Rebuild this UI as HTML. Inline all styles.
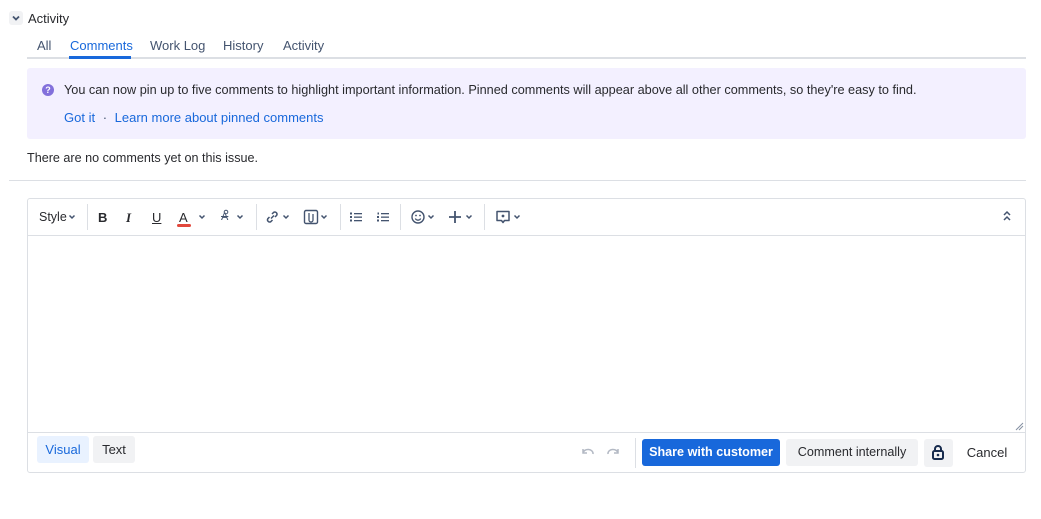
<!DOCTYPE html>
<html><head><style>
body{margin:0;width:1041px;height:519px;background:#fff;font-family:"Liberation Sans",sans-serif;font-size:13px;color:#292a2e;position:relative;overflow:hidden}
.a{position:absolute;white-space:nowrap}
.tb{position:absolute;top:210px;font-size:13px;color:#44546f}
.sep{position:absolute;top:204px;width:1px;height:26px;background:#dcdfe4}
.btn{position:absolute;border-radius:3px;text-align:center;line-height:27px}
svg.i{position:absolute}
</style></head><body>
<div class="a" style="left:9px;top:11px;width:14px;height:14px;background:#f1f2f4;border-radius:3px"></div>
<svg class="a" style="left:11px;top:13px" width="10" height="10"><path d="M2 3.5 L5 6.5 L8 3.5" stroke="#44546f" stroke-width="1.8" fill="none"/></svg>
<div class="a" style="left:28px;top:11px">Activity</div>
<div class="a" style="left:37px;top:38px;color:#44546f">All</div>
<div class="a" style="left:70px;top:38px;color:#1868db">Comments</div>
<div class="a" style="left:150px;top:38px;color:#44546f">Work Log</div>
<div class="a" style="left:223px;top:38px;color:#44546f">History</div>
<div class="a" style="left:283px;top:38px;color:#44546f">Activity</div>
<div class="a" style="left:27px;top:57px;width:999px;height:2px;background:#dcdfe4"></div>
<div class="a" style="left:69px;top:56px;width:62px;height:3px;background:#1868db"></div>
<div class="a" style="left:27px;top:68px;width:999px;height:71px;background:#f3f0ff;border-radius:3px"></div>
<div class="a" style="left:42px;top:84px;width:12px;height:12px;border-radius:50%;background:#8270db;color:#fff;font-size:9px;font-weight:bold;text-align:center;line-height:12px">?</div>
<div class="a" style="left:64px;top:83px;font-size:12.7px">You can now pin up to five comments to highlight important information. Pinned comments will appear above all other comments, so they're easy to find.</div>
<div class="a" style="left:64px;top:110px;color:#1868db">Got it <span style="color:#44546f;margin:0 4px">·</span> Learn more about pinned comments</div>
<div class="a" style="left:27px;top:151px;font-size:12.6px">There are no comments yet on this issue.</div>
<div class="a" style="left:9px;top:180px;width:1017px;height:1px;background:#dcdfe4"></div>
<div class="a" style="left:27px;top:198px;width:997px;height:273px;border:1px solid #dcdfe4;border-radius:3px"></div>
<div class="a" style="left:28px;top:235px;width:997px;height:1px;background:#dcdfe4"></div>
<div class="a" style="left:28px;top:432px;width:997px;height:1px;background:#dcdfe4"></div>
<div class="tb" style="left:39px;color:#292a2e;font-size:12.5px">Style</div>
<div class="sep" style="left:87px"></div>
<div class="tb" style="left:98px;font-weight:bold;color:#292a2e">B</div>
<div class="tb" style="left:126px;font-style:italic;font-family:'Liberation Serif',serif;font-weight:bold;color:#292a2e">I</div>
<div class="tb" style="left:152px;text-decoration:underline;color:#292a2e">U</div>
<div class="tb" style="left:179px;color:#292a2e">A</div>
<div class="a" style="left:177px;top:224px;width:14px;height:3px;background:#e2483d;border-radius:2px"></div>
<div class="tb" style="left:221px;font-size:11px;top:211px;text-decoration:line-through">A</div>
<div class="sep" style="left:256px"></div>
<svg class="i" style="left:264px;top:209px" width="16" height="16"><path d="M7 9.5 L10 6.5 M5.5 8 L3.8 9.7a2.2 2.2 0 0 0 3 3 L8.5 11 M8 5 L9.7 3.3a2.2 2.2 0 0 1 3 3 L11 8" stroke="#44546f" stroke-width="1.5" fill="none"/></svg>
<svg class="i" style="left:303px;top:209px" width="16" height="16"><rect x="1.5" y="1.5" width="13" height="13" rx="1.5" stroke="#44546f" stroke-width="1.4" fill="none"/><path d="M6 4v7a2 2 0 0 0 4 0V5" stroke="#44546f" stroke-width="1.3" fill="none"/></svg>
<div class="sep" style="left:340px"></div>
<svg class="i" style="left:349px;top:210px" width="14" height="14"><g fill="#44546f"><rect x="1" y="2.5" width="2" height="2"/><rect x="1" y="6" width="2" height="2"/><rect x="1" y="9.5" width="2" height="2"/><rect x="5" y="3" width="8" height="1.3"/><rect x="5" y="6.5" width="8" height="1.3"/><rect x="5" y="10" width="8" height="1.3"/></g></svg>
<svg class="i" style="left:376px;top:210px" width="14" height="14"><g fill="#44546f"><rect x="1.5" y="2.5" width="1.5" height="2"/><rect x="1" y="6" width="2" height="2"/><rect x="1" y="9.5" width="2" height="2"/><rect x="5" y="3" width="8" height="1.3"/><rect x="5" y="6.5" width="8" height="1.3"/><rect x="5" y="10" width="8" height="1.3"/></g></svg>
<div class="sep" style="left:400px"></div>
<svg class="i" style="left:410px;top:209px" width="16" height="16"><circle cx="8" cy="8" r="6" stroke="#44546f" stroke-width="1.4" fill="none"/><circle cx="6" cy="6.5" r="0.9" fill="#44546f"/><circle cx="10" cy="6.5" r="0.9" fill="#44546f"/><path d="M5.3 9.5a3 3 0 0 0 5.4 0" stroke="#44546f" stroke-width="1.3" fill="none"/></svg>
<svg class="i" style="left:448px;top:209px" width="14" height="16"><path d="M7 2v12M1 8h12" stroke="#44546f" stroke-width="1.8"/></svg>
<div class="sep" style="left:484px"></div>
<svg class="i" style="left:495px;top:209px" width="16" height="16"><path d="M2 2.5h12v9H9.5L8 13.5 6.5 11.5H2z" stroke="#44546f" stroke-width="1.5" fill="none" stroke-linejoin="round"/><circle cx="8" cy="7" r="1.4" fill="#44546f"/></svg>
<svg class="i" style="left:0;top:0" width="1041" height="240"><g stroke="#44546f" stroke-width="1.5" fill="none"><path d="M69.5 215.5l2.5 2.5 2.5-2.5"/><path d="M199.5 215.5l2.5 2.5 2.5-2.5"/><path d="M237.5 215.5l2.5 2.5 2.5-2.5"/><path d="M283.5 215.5l2.5 2.5 2.5-2.5"/><path d="M321.5 215.5l2.5 2.5 2.5-2.5"/><path d="M428.5 215.5l2.5 2.5 2.5-2.5"/><path d="M466.5 215.5l2.5 2.5 2.5-2.5"/><path d="M514.5 215.5l2.5 2.5 2.5-2.5"/><path d="M1004 215l3-3 3 3M1004 220l3-3 3 3"/></g><circle cx="226" cy="212" r="1.8" stroke="#44546f" stroke-width="1" fill="none"/></svg>
<svg class="i" style="left:1014px;top:421px" width="10" height="10"><path d="M2 9L9 2M5 9L9 5" stroke="#8590a2" stroke-width="1"/></svg>
<div class="btn" style="left:37px;top:436px;width:52px;background:#e9f2ff;color:#1868db">Visual</div>
<div class="btn" style="left:93px;top:436px;width:42px;background:#f1f2f4;color:#292a2e">Text</div>
<svg class="i" style="left:580px;top:446px" width="40" height="12"><g stroke="#b3b9c4" stroke-width="1.5" fill="none"><path d="M3 3v4h4M3 7a5 4 0 0 1 10 1"/><path d="M38 3v4h-4M38 7a5 4 0 0 0-10 1"/></g></svg>
<div class="a" style="left:635px;top:438px;width:1px;height:30px;background:#dcdfe4"></div>
<div class="btn" style="left:642px;top:439px;width:138px;background:#1868db;color:#fff;font-weight:bold;font-size:12.6px">Share with customer</div>
<div class="btn" style="left:786px;top:439px;width:132px;background:#f1f2f4;font-size:12.6px">Comment internally</div>
<div class="btn" style="left:924px;top:439px;width:29px;height:28px;background:#f1f2f4"></div>
<svg class="a" style="left:931px;top:444px" width="14" height="17"><path d="M4 7V5a3 3 0 0 1 6 0v2" stroke="#172b4d" stroke-width="2" fill="none"/><rect x="2" y="7" width="10" height="8" rx="1.5" stroke="#172b4d" stroke-width="2" fill="none"/><circle cx="7" cy="11" r="1.3" fill="#172b4d"/></svg>
<div class="btn" style="left:962px;top:439px;width:50px">Cancel</div>
</body></html>
